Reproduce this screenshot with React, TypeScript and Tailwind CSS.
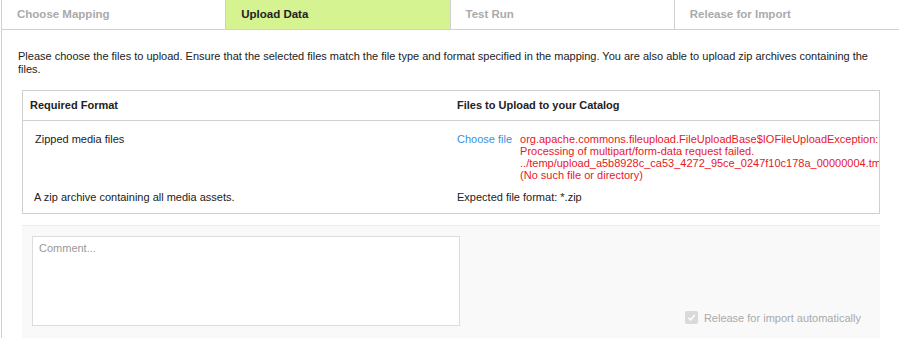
const tabs = [
    { label: 'Choose Mapping', active: false },
    { label: 'Upload Data', active: true },
    { label: 'Test Run', active: false },
    { label: 'Release for Import', active: false },
];

const errorLines = [
    'org.apache.commons.fileupload.FileUploadBase$IOFileUploadException:',
    'Processing of multipart/form-data request failed.',
    '../temp/upload_a5b8928c_ca53_4272_95ce_0247f10c178a_00000004.tmp',
    '(No such file or directory)',
];

const App: React.FC = () => {
    return (
        <div className="w-[899px] h-[338px] overflow-hidden bg-white font-['Liberation_Sans',Arial,sans-serif] text-[11px] text-[#222]">
            <div className="ml-[1px] h-full border-l border-[#d0d0d0]">
                {/* Wizard steps */}
                <div className="flex h-[30px] border-b border-[#d0d0d0]">
                    {tabs.map((t, i) => (
                        <div
                            key={t.label}
                            className={
                                (t.active ? 'bg-[#d5f391] text-[#222] ' : 'bg-white text-[#aaa] ') +
                                (i < 3 ? 'border-r border-[#d0d0d0] ' : '') +
                                'flex w-[225px] items-center pl-[15px] text-[11.5px] font-bold'
                            }
                        >
                            {t.label}
                        </div>
                    ))}
                </div>

                {/* Intro */}
                <p className="pl-[16px] pr-[10px] pt-[20px] leading-[13px]">
                    Please choose the files to upload. Ensure that the selected files match the file type and format specified in the mapping. You are also able to upload zip archives containing the files.
                </p>

                {/* Format table */}
                <div className="ml-[20px] mt-[14px] w-[858px] border border-[#d0d0d0]">
                    <div className="flex h-[30px] items-center border-b border-[#d0d0d0] font-bold">
                        <div className="w-[427px] pl-[7px]">Required Format</div>
                        <div className="pl-[7px]">Files to Upload to your Catalog</div>
                    </div>
                    <div className="flex pt-[12px]">
                        <div className="w-[427px] pl-[12px] leading-[12px]">Zipped media files</div>
                        <div className="flex w-[429px] overflow-hidden pl-[7px] leading-[12px]">
                            <span className="text-[#3b8fdc] whitespace-nowrap">Choose file</span>
                            <div className="ml-[8px] text-[#e8171f] whitespace-nowrap">
                                {errorLines.map((l) => (
                                    <div key={l}>{l}</div>
                                ))}
                            </div>
                        </div>
                    </div>
                    <div className="flex h-[32px] items-center">
                        <div className="w-[427px] pl-[11px]">A zip archive containing all media assets.</div>
                        <div className="pl-[7px]">Expected file format: *.zip</div>
                    </div>
                </div>

                {/* Comment panel */}
                <div className="ml-[20px] mt-[11px] h-[120px] w-[858px] border-t border-[#ececec] bg-[#f9f9f9] flex">
                    <div className="pl-[10px] pt-[10px]">
                        <textarea
                            placeholder="Comment..."
                            className="block h-[90px] w-[428px] resize-none border border-[#dcdcdc] bg-white px-[6px] py-[4px] text-[11px] leading-[14px] placeholder:text-[#999] outline-none"
                        />
                    </div>
                    <div className="flex flex-1 items-end justify-end pb-[19px] pr-[19px]">
                        <label className="flex items-center gap-[6px] text-[#aaa]">
                            <span className="flex h-[13px] w-[13px] items-center justify-center rounded-[2px] bg-[#d9d9d9]">
                                <svg width="9" height="9" viewBox="0 0 10 10">
                                    <path d="M1.5 5.2 L4 7.6 L8.6 2.2" fill="none" stroke="#fff" strokeWidth="1.6" />
                                </svg>
                            </span>
                            Release for import automatically
                        </label>
                    </div>
                </div>
            </div>
        </div>
    );
};

export default App;
